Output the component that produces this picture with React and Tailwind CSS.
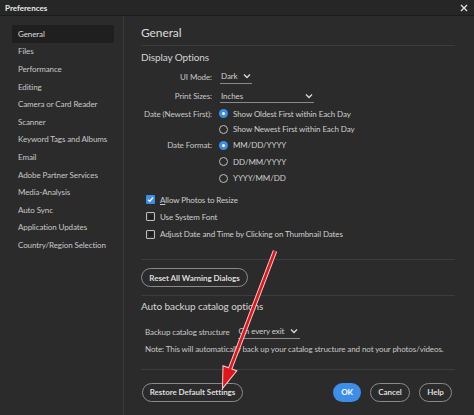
import React from "react";

const sidebarItems = [
  "General",
  "Files",
  "Performance",
  "Editing",
  "Camera or Card Reader",
  "Scanner",
  "Keyword Tags and Albums",
  "Email",
  "Adobe Partner Services",
  "Media-Analysis",
  "Auto Sync",
  "Application Updates",
  "Country/Region Selection",
];

const Radio = ({ checked }) =>
  checked ? (
    <span className="w-[9px] h-[9px] rounded-full bg-[#3a8ee6] flex items-center justify-center">
      <span className="w-[3px] h-[3px] rounded-full bg-white" />
    </span>
  ) : (
    <span className="w-[9px] h-[9px] rounded-full border border-[#bdbdbd]" />
  );

const Checkbox = ({ checked }) =>
  checked ? (
    <span className="w-[9px] h-[9px] rounded-[1px] bg-[#3a8ee6] flex items-center justify-center">
      <svg width="7" height="7" viewBox="0 0 8 8">
        <path d="M1.2 4.2 L3.2 6 L6.8 1.8" fill="none" stroke="white" strokeWidth="1.6" />
      </svg>
    </span>
  ) : (
    <span className="w-[9px] h-[9px] rounded-[1px] border border-[#bdbdbd] flex items-center justify-center">
      <span className="w-[4px] h-[4px] bg-[#1c1c1c]" />
    </span>
  );

const Chevron = () => (
  <svg width="8" height="6" viewBox="0 0 8 6">
    <path d="M1 1.5 L4 4.5 L7 1.5" fill="none" stroke="#d6d6d6" strokeWidth="1.4" />
  </svg>
);

const PillButton = ({ children, className = "" }) => (
  <button
    className={`h-[19px] rounded-full border border-[#8a8a8a] text-[#dcdcdc] font-bold text-[8px] tracking-[-0.05px] flex items-center justify-center whitespace-nowrap ${className}`}
  >
    {children}
  </button>
);

const App = () => {
  return (
    <div
      className="relative w-[474px] h-[415px] bg-[#2b2b2b] text-[#cfcfcf] overflow-hidden flex flex-col tracking-[-0.1px]"
      style={{ fontFamily: "Lato, 'Noto Sans', sans-serif" }}
    >
      {/* Title bar */}
      <div className="h-[16px] shrink-0 bg-[#262626] border-b border-[#1c1c1c] flex items-center justify-between px-[5px]">
        <span className="text-[8px] font-bold text-[#e8e8e8] tracking-normal">Preferences</span>
        <svg width="8" height="8" viewBox="0 0 8 8" className="mr-[1px]">
          <path d="M1 1 L7 7 M7 1 L1 7" stroke="#e0e0e0" strokeWidth="1.4" />
        </svg>
      </div>

      <div className="flex flex-1 min-h-0">
        {/* Sidebar */}
        <div className="w-[124px] shrink-0 border-r border-[#3a3a3a] pt-[9px] pl-[12px] pr-[9px]">
          {sidebarItems.map((item, i) => (
            <div
              key={item}
              className={`h-[17.6px] flex items-center pl-[6px] text-[8px] whitespace-nowrap rounded-[2px] ${
                i === 0 ? "bg-[#1f1f1f] text-[#dedede]" : "text-[#c8c8c8]"
              }`}
            >
              {item}
            </div>
          ))}
        </div>

        {/* Main */}
        <div className="flex-1 min-w-0 pl-[17px] pr-[19px] flex flex-col">
          <div className="h-[30px] shrink-0 flex items-end pb-[3px] text-[12px] text-[#dcdcdc] border-b border-[#3c3c3c] tracking-[-0.1px]">
            General
          </div>
          <div className="h-[20px] shrink-0 flex items-center text-[10px] text-[#d4d4d4] mt-[1px]">Display Options</div>

          <div className="flex flex-col text-[8px]">
            <div className="h-[19px] flex items-center">
              <span className="w-[71px] text-right text-[#c8c8c8]">UI Mode:</span>
              <span className="ml-[8px] flex items-center gap-[5px] border-b border-[#8a8a8a] h-[14px] px-[1px]">
                Dark <Chevron />
              </span>
            </div>
            <div className="h-[20px] flex items-center">
              <span className="w-[71px] text-right text-[#c8c8c8]">Print Sizes:</span>
              <span className="ml-[8px] w-[94px] flex items-center justify-between border-b border-[#8a8a8a] h-[14px] px-[1px]">
                Inches <Chevron />
              </span>
            </div>
            <div className="h-[15px] flex items-center">
              <span className="w-[71px] text-right text-[#c8c8c8] whitespace-nowrap">Date (Newest First):</span>
              <span className="ml-[7px] flex items-center gap-[5px]">
                <Radio checked /> Show Oldest First within Each Day
              </span>
            </div>
            <div className="h-[16px] flex items-center">
              <span className="w-[71px]" />
              <span className="ml-[7px] flex items-center gap-[5px]">
                <Radio /> Show Newest First within Each Day
              </span>
            </div>
            <div className="h-[16px] flex items-center">
              <span className="w-[71px] text-right text-[#c8c8c8]">Date Format:</span>
              <span className="ml-[7px] flex items-center gap-[5px]">
                <Radio checked /> MM/DD/YYYY
              </span>
            </div>
            <div className="h-[17px] flex items-center">
              <span className="w-[71px]" />
              <span className="ml-[7px] flex items-center gap-[5px]">
                <Radio /> DD/MM/YYYY
              </span>
            </div>
            <div className="h-[16px] flex items-center">
              <span className="w-[71px]" />
              <span className="ml-[7px] flex items-center gap-[5px]">
                <Radio /> YYYY/MM/DD
              </span>
            </div>

            <div className="h-[5px]" />
            <div className="h-[17px] flex items-center pl-[5px] gap-[5px]">
              <Checkbox checked />
              <span>
                <span className="underline">A</span>llow Photos to Resize
              </span>
            </div>
            <div className="h-[17px] flex items-center pl-[5px] gap-[5px]">
              <Checkbox /> Use System Font
            </div>
            <div className="h-[18px] flex items-center pl-[5px] gap-[5px]">
              <Checkbox /> Adjust Date and Time by Clicking on Thumbnail Dates
            </div>
          </div>

          <div className="h-[17px] shrink-0 border-b border-[#3c3c3c]" />
          <div className="pt-[8px] pb-[8px] shrink-0 border-b border-[#3c3c3c]">
            <PillButton className="w-[107px]">Reset All Warning Dialogs</PillButton>
          </div>

          <div className="h-[21px] shrink-0 flex items-center text-[10px] text-[#d4d4d4]">Auto backup catalog options</div>
          <div className="h-[6px] shrink-0" />
          <div className="h-[17px] shrink-0 flex items-center pl-[4px] text-[8px]">
            <span className="text-[#c8c8c8]">Backup catalog structure</span>
            <span className="ml-[8px] flex items-center gap-[6px] border-b border-[#8a8a8a] h-[14px] pl-[1px] pr-[2px]">
              On every exit <Chevron />
            </span>
          </div>
          <div className="h-[17px] shrink-0 flex items-center pl-[4px] text-[8px] text-[#c8c8c8] whitespace-nowrap">
            Note: This will automatically back up your catalog structure and not your photos/videos.
          </div>
          <div className="h-[13px] shrink-0 border-b border-[#3c3c3c]" />

          <div className="h-[44px] shrink-0 flex items-center justify-between pl-[1px] pr-[3px]">
            <PillButton className="w-[101px]">Restore Default Settings</PillButton>
            <div className="flex items-center gap-[9px]">
              <button className="h-[19px] w-[28px] rounded-full bg-[#3d8ee8] text-white font-bold text-[8px] flex items-center justify-center">
                OK
              </button>
              <PillButton className="w-[40px]">Cancel</PillButton>
              <PillButton className="w-[33px]">Help</PillButton>
            </div>
          </div>
        </div>
      </div>

      {/* Red annotation arrow */}
      <svg className="absolute left-0 top-0 pointer-events-none" width="474" height="415" viewBox="0 0 474 415">
        <g>
          <line x1="275" y1="251" x2="230" y2="369" stroke="#f4d4d4" strokeWidth="4.5" />
          <polygon points="223,387 236,371 223.5,366.5" fill="#f4d4d4" stroke="#f4d4d4" strokeWidth="2" />
          <line x1="275" y1="251" x2="230" y2="369" stroke="#e3141b" strokeWidth="2.6" />
          <polygon points="223,387 236,371 223.5,366.5" fill="#e3141b" />
        </g>
      </svg>
    </div>
  );
};

export default App;
